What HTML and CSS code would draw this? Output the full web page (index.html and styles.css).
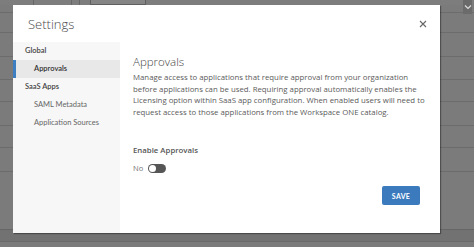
FILE: index.html
```html
<!DOCTYPE html>
<html>
<head>
<meta charset="utf-8">
<link rel="stylesheet" href="styles.css">
</head>
<body>
<div class="page">
  <div class="topbar">
    <div class="tb tb1"></div>
    <div class="tb tb2"></div>
    <div class="tb tb3"></div>
    <div class="tb-spacer"></div>
    <div class="tb-chev"><svg width="8" height="6" viewBox="0 0 8 6"><path d="M1 1.5 L4 4.5 L7 1.5" fill="none" stroke="#ddd" stroke-width="1.2"/></svg></div>
  </div>
  <div class="rows">
    <div class="row r1"></div>
    <div class="row r2"></div>
    <div class="row r3"></div>
    <div class="row r4"></div>
    <div class="row r5"></div>
    <div class="row r6"></div>
    <div class="row r7"></div>
    <div class="row r8"></div>
    <div class="row r9"></div>
  </div>
  <div class="footer"></div>

  <div class="modal">
    <div class="modal-header">
      <h1 class="modal-title">Settings</h1>
      <button class="close" aria-label="Close"><svg width="8" height="8" viewBox="0 0 8 8"><path d="M1 1 L7 7 M7 1 L1 7" stroke="#666" stroke-width="1.1" fill="none"/></svg></button>
    </div>
    <div class="modal-body">
      <nav class="sidebar">
        <div class="nav-group">Global</div>
        <div class="nav-item active">Approvals</div>
        <div class="nav-group">SaaS Apps</div>
        <div class="nav-item">SAML Metadata</div>
        <div class="nav-item">Application Sources</div>
      </nav>
      <section class="content">
        <h2 class="content-title">Approvals</h2>
        <p class="desc">Manage access to applications that require approval from your organization before applications can be used. Requiring approval automatically enables the Licensing option within SaaS app configuration. When enabled users will need to request access to those applications from the Workspace ONE catalog.</p>
        <div class="field-label">Enable Approvals</div>
        <div class="toggle-row">
          <span class="toggle-text">No</span>
          <span class="toggle"><span class="knob"></span></span>
        </div>
        <div class="actions"><button class="save">SAVE</button></div>
      </section>
    </div>
  </div>
</div>
</body>
</html>
```
FILE: styles.css
```css
* { box-sizing: border-box; }
html, body { margin: 0; padding: 0; }
body {
  width: 474px;
  height: 247px;
  overflow: hidden;
  background: #7b7b7b;
  font-family: Lato, "Open Sans", sans-serif;
}
.page {
  position: relative;
  width: 474px;
  height: 247px;
  display: flex;
  flex-direction: column;
}
.topbar {
  height: 5px;
  display: flex;
  background: #7d7d7d;
}
.tb { height: 5px; border-right: 1px solid #666; }
.tb1 { width: 34px; }
.tb2 { width: 38px; }
.tb3 { width: 8px; }
.tb-spacer { width: 56px; border: 1px solid #5f5f5f; border-top: 0; margin-left: 10px; background: #858585; }
.tb-chev {
  margin-left: auto;
  margin-right: 2px;
  width: 9px;
  height: 14px;
  background: #6a6a6a;
  display: flex;
  align-items: center;
  justify-content: center;
}
.rows { flex: 1; display: flex; flex-direction: column; }
.row { border-bottom: 1px solid #6c6c6c; }
.r1 { height: 8px; }
.r2 { height: 20px; }
.r3 { height: 24px; }
.r4 { height: 23px; }
.r5 { height: 22px; }
.r6 { height: 24px; }
.r7 { height: 22px; }
.r8 { height: 24px; }
.r9 { flex: 1; border-bottom: 0; }
.footer {
  height: 13px;
  background: #727272;
  border-top: 1px solid #666;
  border-bottom: 1px solid #6a6a6a;
  margin-bottom: 5px;
}

.modal {
  position: absolute;
  left: 13px;
  top: 5px;
  width: 427px;
  height: 228px;
  background: #fff;
  box-shadow: 1px 1px 1px rgba(0,0,0,0.35);
  display: flex;
  flex-direction: column;
}
.modal-header {
  height: 37px;
  display: flex;
  align-items: center;
  padding: 0 13px 0 15px;
}
.modal-title {
  margin: 0;
  font-family: "Open Sans", sans-serif;
  font-size: 13px;
  font-weight: 300;
  color: #4a4a4a;
  flex: 1;
}
.close {
  border: 0;
  background: none;
  padding: 0;
  width: 8px;
  height: 8px;
  display: flex;
}
.modal-body { flex: 1; display: flex; }
.sidebar {
  width: 107px;
  background: #f7f7f7;
  padding-top: 0;
  display: flex;
  flex-direction: column;
  font-size: 7.5px;
  color: #555;
}
.nav-group {
  height: 18px;
  line-height: 18px;
  padding-left: 12px;
  font-weight: 600;
  color: #444;
}
.nav-item {
  height: 18px;
  line-height: 18px;
  padding-left: 21px;
  color: #666;
}
.nav-item.active {
  background: #e8e8e8;
  color: #333;
  font-weight: 600;
  box-shadow: inset 3px 0 0 #3d7fc1;
}
.content {
  flex: 1;
  padding: 12px 15px 0 13px;
  display: flex;
  flex-direction: column;
  color: #555;
  font-family: "Open Sans", sans-serif;
}
.content-title {
  margin: 0;
  font-size: 11.5px;
  font-weight: 300;
  color: #444;
  line-height: 16px;
}
.desc {
  margin: 2px 0 0;
  font-size: 7.8px;
  line-height: 11.5px;
  color: #5a5a5a;
}
.field-label {
  margin-top: 27px;
  font-size: 7.8px;
  font-weight: 600;
  color: #555;
}
.toggle-row {
  margin-top: 8px;
  display: flex;
  align-items: center;
  gap: 5px;
  font-size: 7.6px;
  color: #777;
}
.toggle {
  width: 18px;
  height: 9px;
  border-radius: 5px;
  background: #565656;
  display: flex;
  align-items: center;
  padding-left: 1px;
}
.knob {
  width: 7px;
  height: 7px;
  border-radius: 50%;
  background: #fff;
}
.actions {
  margin-top: 13px;
  display: flex;
  justify-content: flex-end;
  padding-right: 5px;
}
.save {
  width: 38px;
  height: 19px;
  border: 0;
  border-radius: 2px;
  background: #3b7bbd;
  color: #fff;
  font-family: Lato, sans-serif;
  font-size: 7px;
  font-weight: 700;
  letter-spacing: 0.3px;
  padding: 0;
}
```
